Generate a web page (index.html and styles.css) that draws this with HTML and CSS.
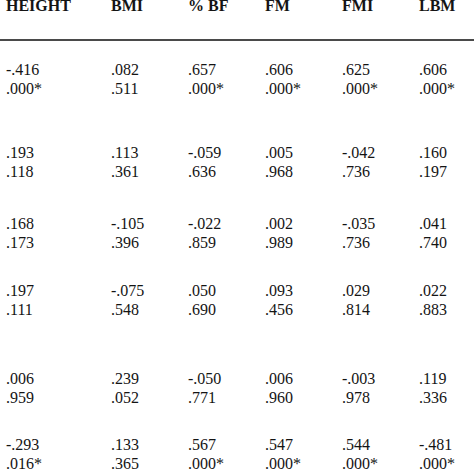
FILE: index.html
```html
<!DOCTYPE html>
<html>
<head>
<meta charset="utf-8">
<link rel="stylesheet" href="styles.css">
</head>
<body>
<div class="table">
  <div class="grid head">
    <div>HEIGHT</div><div>BMI</div><div>% BF</div><div>FM</div><div>FMI</div><div>LBM</div>
  </div>
  <div class="rule"></div>
  <div class="grid body">
    <div class="cell"><span>-.416</span><span>.000*</span></div>
    <div class="cell"><span>.082</span><span>.511</span></div>
    <div class="cell"><span>.657</span><span>.000*</span></div>
    <div class="cell"><span>.606</span><span>.000*</span></div>
    <div class="cell"><span>.625</span><span>.000*</span></div>
    <div class="cell"><span>.606</span><span>.000*</span></div>

    <div class="cell"><span>.193</span><span>.118</span></div>
    <div class="cell"><span>.113</span><span>.361</span></div>
    <div class="cell"><span>-.059</span><span>.636</span></div>
    <div class="cell"><span>.005</span><span>.968</span></div>
    <div class="cell"><span>-.042</span><span>.736</span></div>
    <div class="cell"><span>.160</span><span>.197</span></div>

    <div class="cell"><span>.168</span><span>.173</span></div>
    <div class="cell"><span>-.105</span><span>.396</span></div>
    <div class="cell"><span>-.022</span><span>.859</span></div>
    <div class="cell"><span>.002</span><span>.989</span></div>
    <div class="cell"><span>-.035</span><span>.736</span></div>
    <div class="cell"><span>.041</span><span>.740</span></div>

    <div class="cell"><span>.197</span><span>.111</span></div>
    <div class="cell"><span>-.075</span><span>.548</span></div>
    <div class="cell"><span>.050</span><span>.690</span></div>
    <div class="cell"><span>.093</span><span>.456</span></div>
    <div class="cell"><span>.029</span><span>.814</span></div>
    <div class="cell"><span>.022</span><span>.883</span></div>

    <div class="cell"><span>.006</span><span>.959</span></div>
    <div class="cell"><span>.239</span><span>.052</span></div>
    <div class="cell"><span>-.050</span><span>.771</span></div>
    <div class="cell"><span>.006</span><span>.960</span></div>
    <div class="cell"><span>-.003</span><span>.978</span></div>
    <div class="cell"><span>.119</span><span>.336</span></div>

    <div class="cell"><span>-.293</span><span>.016*</span></div>
    <div class="cell"><span>.133</span><span>.365</span></div>
    <div class="cell"><span>.567</span><span>.000*</span></div>
    <div class="cell"><span>.547</span><span>.000*</span></div>
    <div class="cell"><span>.544</span><span>.000*</span></div>
    <div class="cell"><span>-.481</span><span>.000*</span></div>
  </div>
</div>
</body>
</html>
```

FILE: styles.css
```css
html, body {
  margin: 0;
  padding: 0;
  background: #ffffff;
  overflow: hidden;
}

.table {
  width: 474px;
  height: 474px;
  font-family: "Liberation Serif", "Times New Roman", serif;
  font-size: 16px;
  line-height: 19px;
  color: #141414;
}

.grid {
  display: grid;
  grid-template-columns: 105px 77px 77px 77px 77px 1fr;
  padding-left: 6px;
}

.head {
  font-weight: bold;
  margin-top: -4px;
}

.rule {
  height: 2px;
  background: #4a4a4a;
  margin-top: 24px;
}

.body {
  padding-top: 19px;
  grid-template-rows: 83px 71px 67px 88px 66px auto;
}

.cell span {
  display: block;
}
```
